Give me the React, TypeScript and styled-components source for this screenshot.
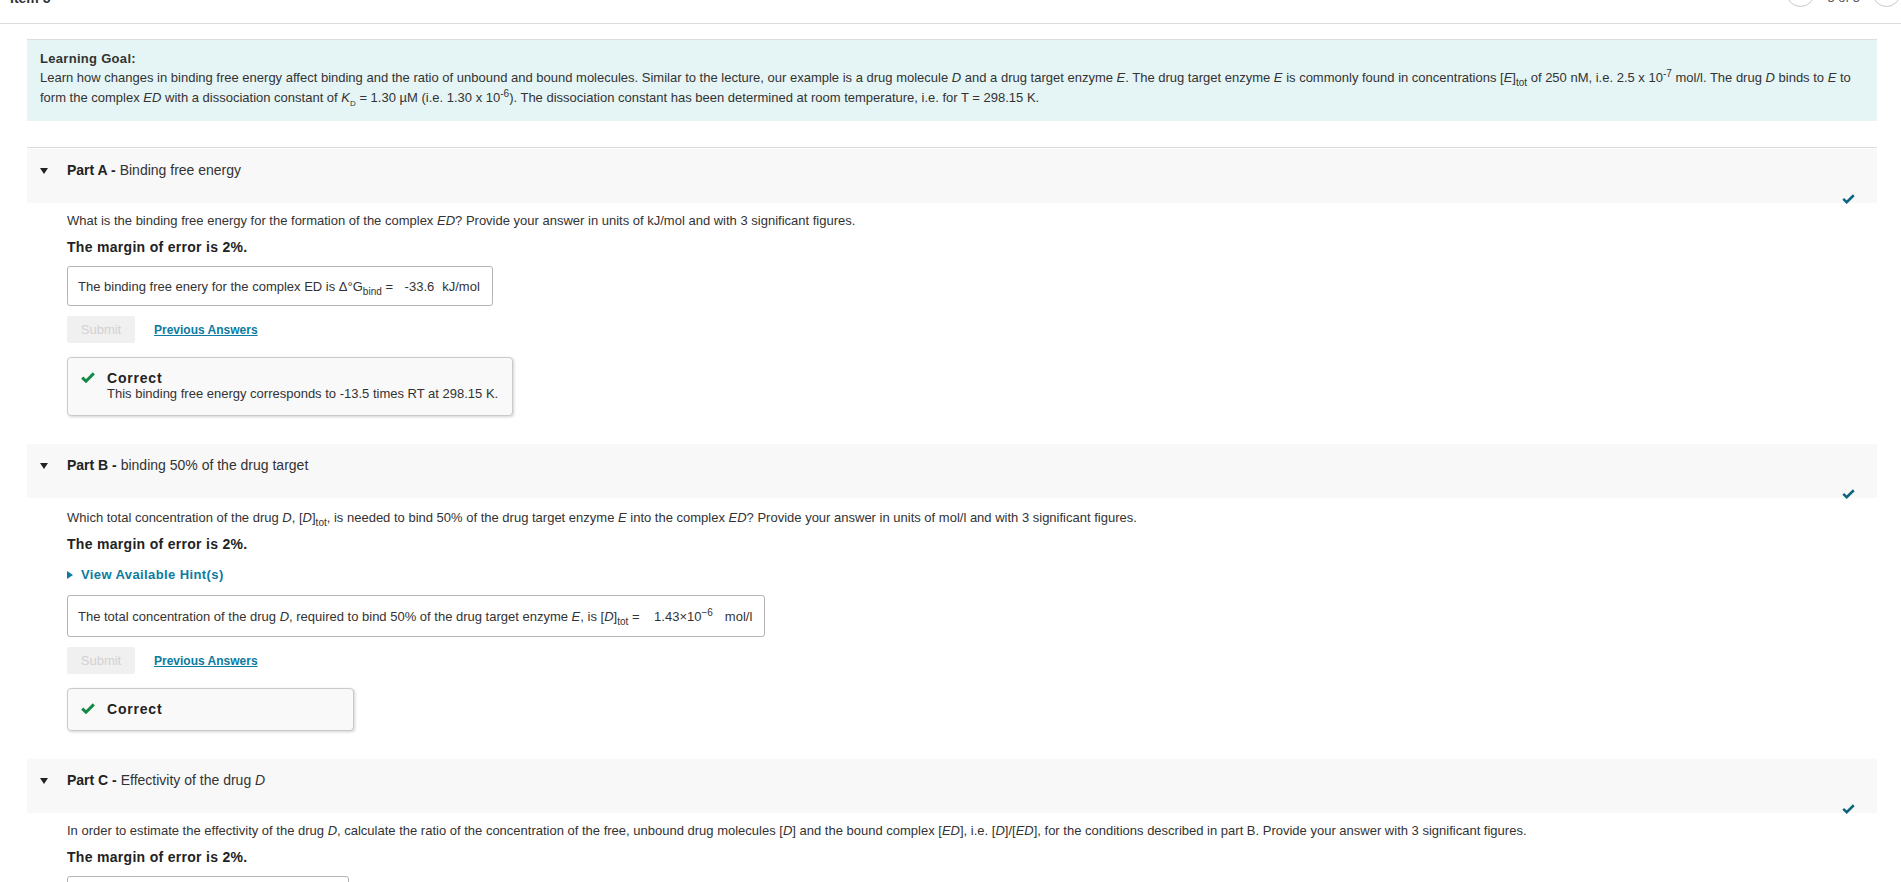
import React from 'react';
import styled, { createGlobalStyle } from 'styled-components';

const GlobalStyle = createGlobalStyle`
  html, body {
    margin: 0;
    padding: 0;
    background: #fff;
  }
  body {
    font-family: "Liberation Sans", Arial, sans-serif;
    font-size: 13px;
    color: #333;
    overflow: hidden;
  }
  sub, sup {
    font-size: 10px;
    line-height: 0;
  }
`;

const TopBar = styled.div`
  height: 62px;
  margin-top: -39px;
  border-bottom: 1px solid #dcdcdc;
  display: flex;
  align-items: center;
  justify-content: space-between;
  padding: 0 0 0 10px;
`;

const ItemTitle = styled.div`
  font-size: 14px;
  font-weight: bold;
  padding-top: 12px;
`;

const Pager = styled.div`
  display: flex;
  align-items: center;
  gap: 12px;
`;

const PagerButton = styled.div`
  width: 27px;
  height: 27px;
  border-radius: 50%;
  border: 1px solid #c8c8c8;
  color: #999;
  display: flex;
  align-items: center;
  justify-content: center;
  font-size: 14px;
`;

const PagerText = styled.span`
  font-size: 13px;
  color: #555;
  padding-top: 10px;
`;

const Main = styled.div`
  padding: 15px 24px 0 27px;
`;

const GoalBox = styled.div`
  background: #e5f5f5;
  border-top: 1px solid #dcdcdc;
  padding: 10px 14px 13px 13px;
  line-height: 20px;
`;

const GoalTitle = styled.div`
  font-weight: bold;
  line-height: 18px;
  letter-spacing: 0.3px;
`;

const Parts = styled.div`
  margin-top: 26px;
  border-top: 1px solid #dcdcdc;
  padding-top: 1px;
`;

const Part = styled.section``;

const PartHeader = styled.div`
  position: relative;
  height: 54px;
  background: #f8f8f8;
  display: flex;
  align-items: flex-start;
  padding-top: 13px;
  box-sizing: border-box;
`;

const Caret = styled.span`
  width: 0;
  height: 0;
  border-left: 4.5px solid transparent;
  border-right: 4.5px solid transparent;
  border-top: 6px solid #222;
  margin: 6px 19px 0 13px;
`;

const PartTitle = styled.div`
  font-size: 14px;
  line-height: 16px;
  color: #333;
  b {
    color: #222;
  }
`;

const HeaderCheck = styled.svg`
  position: absolute;
  right: 22px;
  bottom: -1px;
`;

const PartBody = styled.div<{ $pad?: number }>`
  padding: ${p => p.$pad ?? 10}px 0 28px 40px;
  display: flex;
  flex-direction: column;
  align-items: flex-start;
`;

const Question = styled.p`
  margin: 0;
  line-height: 16px;
`;

const ErrorMargin = styled.p`
  margin: 10px 0 0;
  font-size: 14px;
  font-weight: bold;
  letter-spacing: 0.3px;
  line-height: 16px;
  color: #222;
`;

const HintToggle = styled.div`
  margin-top: 15px;
  display: flex;
  align-items: center;
  font-weight: bold;
  font-size: 13px;
  letter-spacing: 0.4px;
  color: #0b7ba0;
  line-height: 16px;
`;

const HintCaret = styled.span`
  width: 0;
  height: 0;
  border-top: 4.5px solid transparent;
  border-bottom: 4.5px solid transparent;
  border-left: 6px solid #0b7ba0;
  margin-right: 8px;
`;

const AnswerBox = styled.div<{ $tall?: boolean }>`
  margin-top: ${p => (p.$tall ? 12 : 11)}px;
  border: 1px solid #b4b4b4;
  border-radius: 3px;
  padding: 0 12px 0 10px;
  height: ${p => (p.$tall ? 40 : 38)}px;
  display: flex;
  align-items: center;
  white-space: nowrap;
`;

const AnswerLabel = styled.span``;

const AnswerValue = styled.span<{ $gap?: number }>`
  margin-left: ${p => p.$gap ?? 8}px;
`;

const AnswerUnit = styled.span<{ $gap?: number }>`
  margin-left: ${p => p.$gap ?? 8}px;
`;

const Actions = styled.div`
  margin-top: 10px;
  display: flex;
  align-items: center;
  gap: 19px;
`;

const SubmitButton = styled.button`
  width: 68px;
  height: 27px;
  border: none;
  border-radius: 2px;
  background: #f0f0f0;
  color: #d2d2d2;
  font-family: inherit;
  font-size: 13px;
  padding: 0;
`;

const PrevLink = styled.a`
  font-weight: bold;
  font-size: 12px;
  color: #0b7ba0;
  text-decoration: underline;
  line-height: 16px;
`;

const Feedback = styled.div<{ $minWidth?: number }>`
  margin-top: 14px;
  min-width: ${p => p.$minWidth ?? 0}px;
  box-sizing: border-box;
  background: #f9f9f9;
  border: 1px solid #cacaca;
  border-radius: 4px;
  box-shadow: 1px 1px 3px rgba(0, 0, 0, 0.18);
  padding: 12px 14px 13px 13px;
  display: flex;
  gap: 12px;
`;

const CheckSlot = styled.div`
  padding-top: 1px;
`;

const FeedbackText = styled.div`
  line-height: 16px;
`;

const FeedbackTitle = styled.div`
  font-weight: bold;
  font-size: 14px;
  letter-spacing: 0.8px;
  color: #222;
`;

const Check = ({ color, w, h }: { color: string; w: number; h: number }) => (
  <svg width={w} height={h} viewBox="0 0 14 11">
    <path d="M1.2 5.6 L5 9.2 L12.8 1.4" fill="none" stroke={color} strokeWidth="3" />
  </svg>
);

const PartHead = ({ label, title }: { label: string; title: React.ReactNode }) => (
  <PartHeader>
    <Caret />
    <PartTitle>
      <b>{label} -</b> {title}
    </PartTitle>
    <HeaderCheck width="13" height="10" viewBox="0 0 14 11">
      <path d="M1.2 5.4 L5 9 L12.8 1.4" fill="none" stroke="#0c6580" strokeWidth="2.8" />
    </HeaderCheck>
  </PartHeader>
);

const Correct = ({ children, minWidth }: { children?: React.ReactNode; minWidth?: number }) => (
  <Feedback $minWidth={minWidth}>
    <CheckSlot>
      <Check color="#148a44" w={14} h={11} />
    </CheckSlot>
    <FeedbackText>
      <FeedbackTitle>Correct</FeedbackTitle>
      {children && <div>{children}</div>}
    </FeedbackText>
  </Feedback>
);

const Buttons = () => (
  <Actions>
    <SubmitButton disabled>Submit</SubmitButton>
    <PrevLink href="#">Previous Answers</PrevLink>
  </Actions>
);

export default function App() {
  return (
    <>
      <GlobalStyle />
      <TopBar>
        <ItemTitle>Item 5</ItemTitle>
        <Pager>
          <PagerButton>‹</PagerButton>
          <PagerText>5 of 5</PagerText>
          <PagerButton>›</PagerButton>
        </Pager>
      </TopBar>
      <Main>
        <GoalBox>
          <GoalTitle>Learning Goal:</GoalTitle>
          Learn how changes in binding free energy affect binding and the ratio of unbound and bound molecules.
          Similar to the lecture, our example is a drug molecule <i>D</i> and a drug target enzyme <i>E</i>. The
          drug target enzyme <i>E</i> is commonly found in concentrations [<i>E</i>]<sub>tot</sub> of 250 nM, i.e.
          2.5 x 10<sup>-7</sup> mol/l. The drug <i>D</i> binds to <i>E</i> to form the complex <i>ED</i> with a
          dissociation constant of <i>K</i><sub style={{ fontSize: 8 }}>D</sub> = 1.30 µM (i.e. 1.30 x 10<sup>-6</sup>). The
          dissociation constant has been determined at room temperature, i.e. for T = 298.15 K.
        </GoalBox>

        <Parts>
          <Part>
            <PartHead label="Part A" title="Binding free energy" />
            <PartBody>
              <Question>
                What is the binding free energy for the formation of the complex <i>ED</i>? Provide your answer in
                units of kJ/mol and with 3 significant figures.
              </Question>
              <ErrorMargin>The margin of error is 2%.</ErrorMargin>
              <AnswerBox>
                <AnswerLabel>
                  The binding free enery for the complex ED is Δ°G<sub>bind</sub>&nbsp;=&nbsp;
                </AnswerLabel>
                <AnswerValue>-33.6</AnswerValue>
                <AnswerUnit>kJ/mol</AnswerUnit>
              </AnswerBox>
              <Buttons />
              <Correct>This binding free energy corresponds to -13.5 times RT at 298.15 K.</Correct>
            </PartBody>
          </Part>

          <Part>
            <PartHead label="Part B" title="binding 50% of the drug target" />
            <PartBody $pad={12}>
              <Question>
                Which total concentration of the drug <i>D</i>, [<i>D</i>]<sub>tot</sub>, is needed to bind 50% of the
                drug target enzyme <i>E</i> into the complex <i>ED</i>? Provide your answer in units of mol/l and with 3
                significant figures.
              </Question>
              <ErrorMargin>The margin of error is 2%.</ErrorMargin>
              <HintToggle>
                <HintCaret />
                View Available Hint(s)
              </HintToggle>
              <AnswerBox $tall>
                <AnswerLabel>
                  The total concentration of the drug <i>D</i>, required to bind 50% of the drug target enzyme{' '}
                  <i>E</i>, is [<i>D</i>]<sub>tot</sub>&nbsp;=&nbsp;
                </AnswerLabel>
                <AnswerValue $gap={11}>
                  1.43×10<sup>−6</sup>
                </AnswerValue>
                <AnswerUnit $gap={12}>mol/l</AnswerUnit>
              </AnswerBox>
              <Buttons />
              <Correct minWidth={287} />
            </PartBody>
          </Part>

          <Part>
            <PartHead
              label="Part C"
              title={
                <>
                  Effectivity of the drug <i>D</i>
                </>
              }
            />
            <PartBody>
              <Question>
                In order to estimate the effectivity of the drug <i>D</i>, calculate the ratio of the concentration of the
                free, unbound drug molecules [<i>D</i>] and the bound complex [<i>ED</i>], i.e. [<i>D</i>]/[<i>ED</i>], for
                the conditions described in part B. Provide your answer with 3 significant figures.
              </Question>
              <ErrorMargin>The margin of error is 2%.</ErrorMargin>
              <AnswerBox style={{ width: 258 }}>&nbsp;</AnswerBox>
            </PartBody>
          </Part>
        </Parts>
      </Main>
    </>
  );
}
